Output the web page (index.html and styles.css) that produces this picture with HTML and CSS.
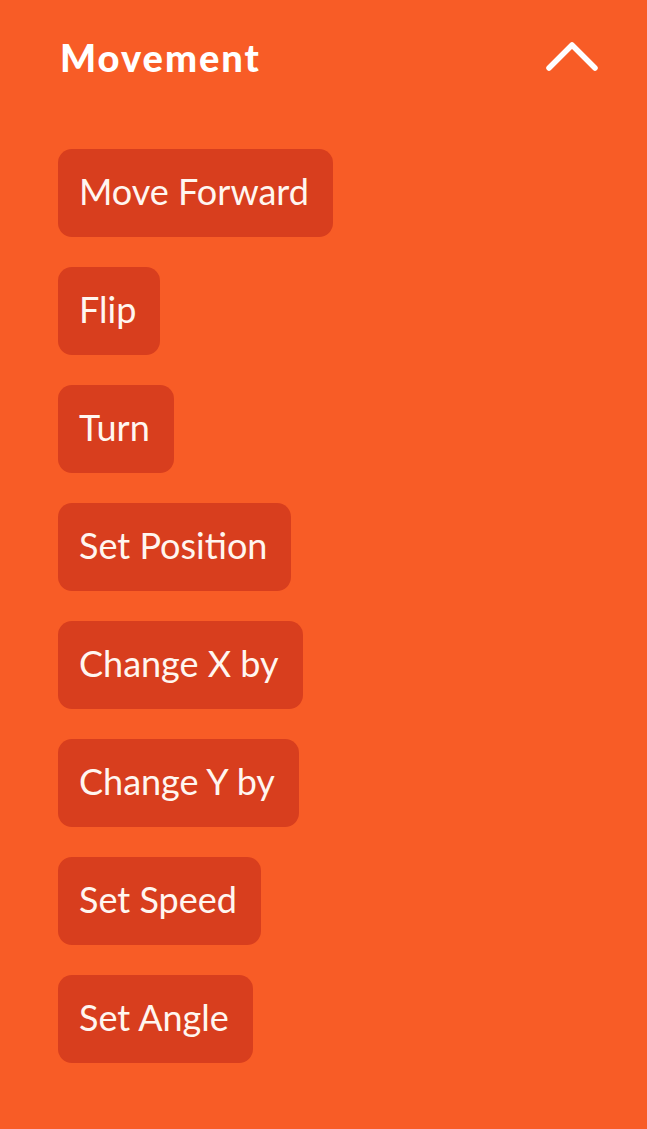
FILE: index.html
```html
<!DOCTYPE html>
<html>
<head>
<meta charset="utf-8">
<link rel="stylesheet" href="styles.css">
</head>
<body>
<div class="panel">
  <div class="header">
    <span class="title">Movement</span>
    <svg class="chevron" width="54" height="34" viewBox="0 0 54 34">
      <path d="M4 29 L27 6 L50 29" fill="none" stroke="#fff" stroke-width="5.5" stroke-linecap="round" stroke-linejoin="round"/>
    </svg>
  </div>
  <div class="list">
    <div class="block">Move Forward</div>
    <div class="block">Flip</div>
    <div class="block">Turn</div>
    <div class="block">Set Position</div>
    <div class="block">Change X by</div>
    <div class="block">Change Y by</div>
    <div class="block">Set Speed</div>
    <div class="block">Set Angle</div>
  </div>
</div>
</body>
</html>
```
FILE: styles.css
```css
html, body {
  margin: 0;
  padding: 0;
  background: #f85c26;
}
.panel {
  width: 647px;
  height: 1129px;
  background: #f85c26;
  font-family: Lato, "Open Sans", sans-serif;
  color: #fff;
  box-sizing: border-box;
}
.header {
  display: flex;
  align-items: center;
  justify-content: space-between;
  padding: 33px 48px 0 60px;
  height: 48px;
}
.title {
  font-size: 38px;
  font-weight: 900;
  letter-spacing: 2px;
}
.chevron {
  display: block;
  margin-top: -3px;
}
.list {
  display: flex;
  flex-direction: column;
  align-items: flex-start;
  gap: 30px;
  padding: 68px 0 0 58px;
}
.block {
  background: #d83e1e;
  border-radius: 14px;
  height: 88px;
  box-sizing: border-box;
  padding: 0 24px 4px 21px;
  display: flex;
  align-items: center;
  font-size: 36px;
  font-weight: 400;
  color: #fff6f0;
}
```
